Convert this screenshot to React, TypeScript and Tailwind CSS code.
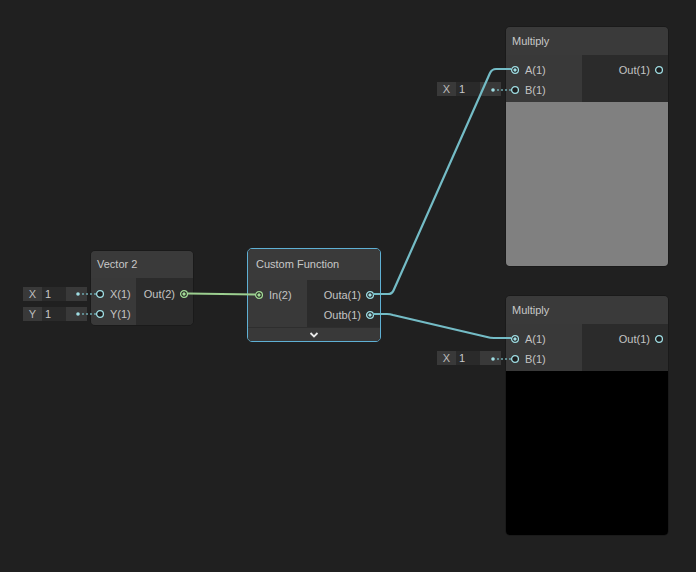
import React from "react";

const FONT = { fontFamily: '"Liberation Sans", Arial, sans-serif' };
const CYAN = "#9fdde3";
const GREEN = "#a3dc97";

function Port({ color, filled }: { color: string; filled?: boolean }) {
  return (
    <svg width="10" height="10" viewBox="0 0 10 10" className="shrink-0">
      <circle cx="5" cy="5" r="3.4" fill="#1e1e1e" stroke={color} strokeWidth="1.3" />
      {filled && <circle cx="5" cy="5" r="1.7" fill={color} />}
    </svg>
  );
}

function InRow({ label, color, filled, pl }: { label: string; color: string; filled?: boolean; pl: string }) {
  return (
    <div className={`h-[20px] flex items-center gap-[5px] ${pl}`}>
      <Port color={color} filled={filled} />
      <span className="text-[11px] text-[#c4c4c4] leading-none">{label}</span>
    </div>
  );
}

function OutRow({ label, color, filled, pr }: { label: string; color: string; filled?: boolean; pr: string }) {
  return (
    <div className={`h-[20px] flex items-center justify-end gap-[4px] ${pr}`}>
      <span className="text-[11px] text-[#c4c4c4] leading-none">{label}</span>
      <Port color={color} filled={filled} />
    </div>
  );
}

function Field({ label, cls }: { label: string; cls: string }) {
  return (
    <div className={`absolute h-[14px] w-[64px] bg-[#393939] flex items-center ${cls}`}>
      <span className="w-[19px] text-center text-[11px] text-[#bdbdbd] leading-none">{label}</span>
      <div className="w-[24px] h-[14px] bg-[#2a2a2a] flex items-center pl-[3px] text-[11px] text-[#c8c8c8] leading-none">1</div>
    </div>
  );
}

function Multiply({ top, previewCls }: { top: string; previewCls: string }) {
  return (
    <div className={`absolute left-[505px] ${top} w-[164px] h-[241px] rounded-[5px] border border-[#1a1a1a] bg-[#2b2b2b] overflow-hidden flex flex-col`}>
      <div className="h-[28px] shrink-0 bg-[#3a3a3a] flex items-center pl-[6px] text-[11px] text-[#c8c8c8]">Multiply</div>
      <div className="flex h-[47px] shrink-0">
        <div className="w-[76px] bg-[#393939] pt-[5px]">
          <InRow label="A(1)" color={CYAN} filled pl="pl-[4px]" />
          <InRow label="B(1)" color={CYAN} pl="pl-[4px]" />
        </div>
        <div className="flex-1 bg-[#2b2b2b] pt-[5px]">
          <OutRow label="Out(1)" color={CYAN} pr="pr-[4px]" />
        </div>
      </div>
      <div className={`flex-1 ${previewCls}`} />
    </div>
  );
}

export default function App() {
  return (
    <div className="relative w-[696px] h-[572px] bg-[#202020] overflow-hidden" style={FONT}>
      {/* Vector 2 */}
      <div className="absolute left-[90px] top-[250px] w-[104px] h-[76px] rounded-[5px] border border-[#1a1a1a] bg-[#2b2b2b] overflow-hidden flex flex-col">
        <div className="h-[27px] shrink-0 bg-[#3a3a3a] flex items-center pl-[6px] text-[11px] text-[#c8c8c8]">Vector 2</div>
        <div className="flex flex-1">
          <div className="w-[45px] bg-[#393939] pt-[6px]">
            <InRow label="X(1)" color={CYAN} pl="pl-[4px]" />
            <InRow label="Y(1)" color={CYAN} pl="pl-[4px]" />
          </div>
          <div className="flex-1 bg-[#2b2b2b] pt-[6px]">
            <OutRow label="Out(2)" color={GREEN} filled pr="pr-[4px]" />
          </div>
        </div>
      </div>

      {/* Custom Function */}
      <div className="absolute left-[247px] top-[248px] w-[134px] h-[94px] rounded-[5px] border border-[#5fb0d4] bg-[#2b2b2b] overflow-hidden flex flex-col">
        <div className="h-[31px] shrink-0 bg-[#3a3a3a] flex items-center pl-[8px] text-[11px] text-[#c8c8c8]">Custom Function</div>
        <div className="flex h-[47px] shrink-0">
          <div className="w-[59px] bg-[#393939] pt-[5px]">
            <InRow label="In(2)" color={GREEN} filled pl="pl-[6px]" />
          </div>
          <div className="flex-1 bg-[#2b2b2b] pt-[5px]">
            <OutRow label="Outa(1)" color={CYAN} filled pr="pr-[5px]" />
            <OutRow label="Outb(1)" color={CYAN} filled pr="pr-[5px]" />
          </div>
        </div>
        <div className="flex-1 bg-[#393939] border-t border-[#2e2e2e] flex items-center justify-center">
          <svg width="10" height="6" viewBox="0 0 10 6">
            <polyline points="1.5,1 5,4.5 8.5,1" fill="none" stroke="#e8e8e8" strokeWidth="1.8" />
          </svg>
        </div>
      </div>

      <Multiply top="top-[26px]" previewCls="bg-[#808080]" />
      <Multiply top="top-[295px]" previewCls="bg-[#000000]" />

      {/* Inline value fields */}
      <Field label="X" cls="left-[23px] top-[287px]" />
      <Field label="Y" cls="left-[23px] top-[307px]" />
      <Field label="X" cls="left-[437px] top-[82px]" />
      <Field label="X" cls="left-[437px] top-[351px]" />

      {/* Wires overlay */}
      <svg className="absolute left-0 top-0 pointer-events-none" width="696" height="572" viewBox="0 0 696 572">
        {/* dashed connectors */}
        {[
          [78, 294, 96],
          [78, 314, 96],
          [493, 90, 511],
          [493, 359, 511],
        ].map(([x, y, x2], i) => (
          <g key={i}>
            <circle cx={x} cy={y} r="1.8" fill={CYAN} />
            <line x1={x + 4} y1={y} x2={x2} y2={y} stroke="#6fa8ae" strokeWidth="1.4" strokeDasharray="2 2" />
          </g>
        ))}
        {/* green wire */}
        <path d="M188 293.5 L255 294.5" stroke="#9ccf90" strokeWidth="2.2" fill="none" />
        {/* cyan wires */}
        <path
          d="M373 294 L388 294 Q392 294 393.5 290.5 L490 73 Q492 69 496 69 L511 69"
          stroke="#74bcc6"
          strokeWidth="2.2"
          fill="none"
        />
        <path
          d="M373 314 L387 314 Q390 314 393 315 L487 337 Q490 338 494 338 L511 338"
          stroke="#74bcc6"
          strokeWidth="2.2"
          fill="none"
        />
      </svg>
    </div>
  );
}
